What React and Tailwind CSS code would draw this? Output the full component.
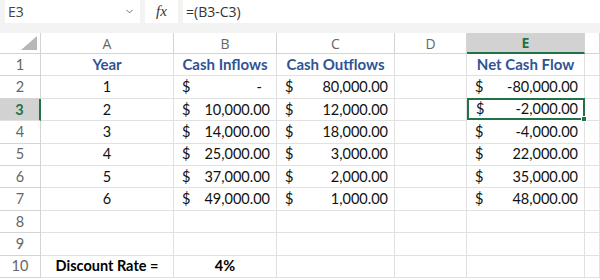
import { ChevronDown } from "lucide-react";

const cols = ["A", "B", "C", "D", "E", "F"];

const rows = [
  { year: "1", inflow: "-", outflow: "80,000.00", net: "-80,000.00" },
  { year: "2", inflow: "10,000.00", outflow: "12,000.00", net: "-2,000.00" },
  { year: "3", inflow: "14,000.00", outflow: "18,000.00", net: "-4,000.00" },
  { year: "4", inflow: "25,000.00", outflow: "3,000.00", net: "22,000.00" },
  { year: "5", inflow: "37,000.00", outflow: "2,000.00", net: "35,000.00" },
  { year: "6", inflow: "49,000.00", outflow: "1,000.00", net: "48,000.00" },
];

const cell = "border-r border-b border-[#e1e1e1] h-[22.4px] flex items-center";

const Money = ({ value, pad = "pr-[6px]" }) => (
  <div className={`${cell} justify-between pl-[8px] ${pad}`}>
    <span>$</span>
    <span>{value}</span>
  </div>
);

const RowHead = ({ n, active }) =>
  active ? (
    <div className="h-[22.4px] flex items-center justify-center bg-[#d2d2d2] border-r-2 border-r-[#217346] border-b border-[#e1e1e1] text-[#217346] font-bold">
      {n}
    </div>
  ) : (
    <div className="h-[22.4px] flex items-center justify-center border-r border-b border-[#d4d4d4] text-[#666]">
      {n}
    </div>
  );

export default function App() {
  return (
    <div className="w-[600px] h-[280px] overflow-hidden bg-white text-[14.5px] text-[#111] font-['Lato',sans-serif]">
      {/* formula bar */}
      <div className="h-[33px] bg-[#f3f3f3] flex items-start gap-[5px] pl-[5px]">
        <div className="w-[135px] h-[23px] bg-white flex items-center justify-between pl-[3px] pr-[5px] text-[14px] text-[#444] font-['Open_Sans',sans-serif]">
          <span>E3</span>
          <ChevronDown className="w-[11px] h-[11px] text-[#666]" strokeWidth={2} />
        </div>
        <div className="w-[33px] h-[23px] bg-white flex items-center justify-center text-[15px] italic text-[#333] font-['Liberation_Serif',serif]">
          fx
        </div>
        <div className="flex-1 h-[23px] bg-white flex items-center pl-[3px] text-[14px] text-[#333] font-['Open_Sans',sans-serif]">
          =(B3-C3)
        </div>
      </div>

      <div className="grid grid-cols-[41px_133px_103px_118px_72px_118px_1fr]">
        {/* column headers */}
        <div className="h-[21px] border-r border-b border-[#d4d4d4] relative">
          <svg className="absolute right-[3px] bottom-[3px]" width="16" height="14" viewBox="0 0 16 14">
            <polygon points="16,0 16,14 0,14" fill="#b7b7b7" />
          </svg>
        </div>
        {cols.map((c) =>
          c === "E" ? (
            <div key={c} className="h-[21px] flex items-center justify-center bg-[#d2d2d2] border-b-2 border-b-[#217346] border-r border-r-[#d4d4d4] text-[#217346] font-bold text-[14px] font-['Open_Sans',sans-serif]">
              {c}
            </div>
          ) : (
            <div key={c} className="h-[21px] flex items-center justify-center border-r border-b border-[#d4d4d4] text-[#666] text-[14px] font-['Open_Sans',sans-serif]">
              {c === "F" ? "" : c}
            </div>
          )
        )}

        {/* row 1 */}
        <RowHead n="1" />
        <div className={`${cell} justify-center font-bold text-[#2f5496] text-[15px]`}>Year</div>
        <div className={`${cell} justify-center font-bold text-[#2f5496] text-[15px]`}>Cash Inflows</div>
        <div className={`${cell} justify-center font-bold text-[#2f5496] text-[15px]`}>Cash Outflows</div>
        <div className={cell} />
        <div className={`${cell} justify-center font-bold text-[#2f5496] text-[15px]`}>Net Cash Flow</div>
        <div className={cell} />

        {rows.map((r, i) => {
          const n = i + 2;
          const active = n === 3;
          return [
            <RowHead key={`h${n}`} n={String(n)} active={active} />,
            <div key={`a${n}`} className={`${cell} justify-center`}>{r.year}</div>,
            r.inflow === "-" ? (
              <div key={`b${n}`} className={`${cell} justify-between pl-[8px] pr-[14px]`}>
                <span>$</span>
                <span>-</span>
              </div>
            ) : (
              <Money key={`b${n}`} value={r.inflow} />
            ),
            <Money key={`c${n}`} value={r.outflow} />,
            <div key={`d${n}`} className={cell} />,
            active ? (
              <div key={`e${n}`} className="h-[22.4px] relative border-2 border-[#217346] flex items-center justify-between pl-[7px] pr-[5px] -mt-px">
                <span>$</span>
                <span>{r.net}</span>
                <div className="absolute -right-[4px] -bottom-[4px] w-[6px] h-[6px] bg-[#217346] border border-white" />
              </div>
            ) : (
              <Money key={`e${n}`} value={r.net} />
            ),
            <div key={`f${n}`} className={cell} />,
          ];
        })}

        {/* rows 8-9 */}
        {[8, 9].map((n) => [
          <RowHead key={`h${n}`} n={String(n)} />,
          ...cols.map((c) => <div key={`${c}${n}`} className={cell} />),
        ])}

        {/* row 10 */}
        <RowHead n="10" />
        <div className={`${cell} justify-center font-bold text-black`}>Discount Rate =</div>
        <div className={`${cell} justify-center font-bold text-black`}>4%</div>
        <div className={cell} />
        <div className={cell} />
        <div className={cell} />
        <div className={cell} />
      </div>
    </div>
  );
}
